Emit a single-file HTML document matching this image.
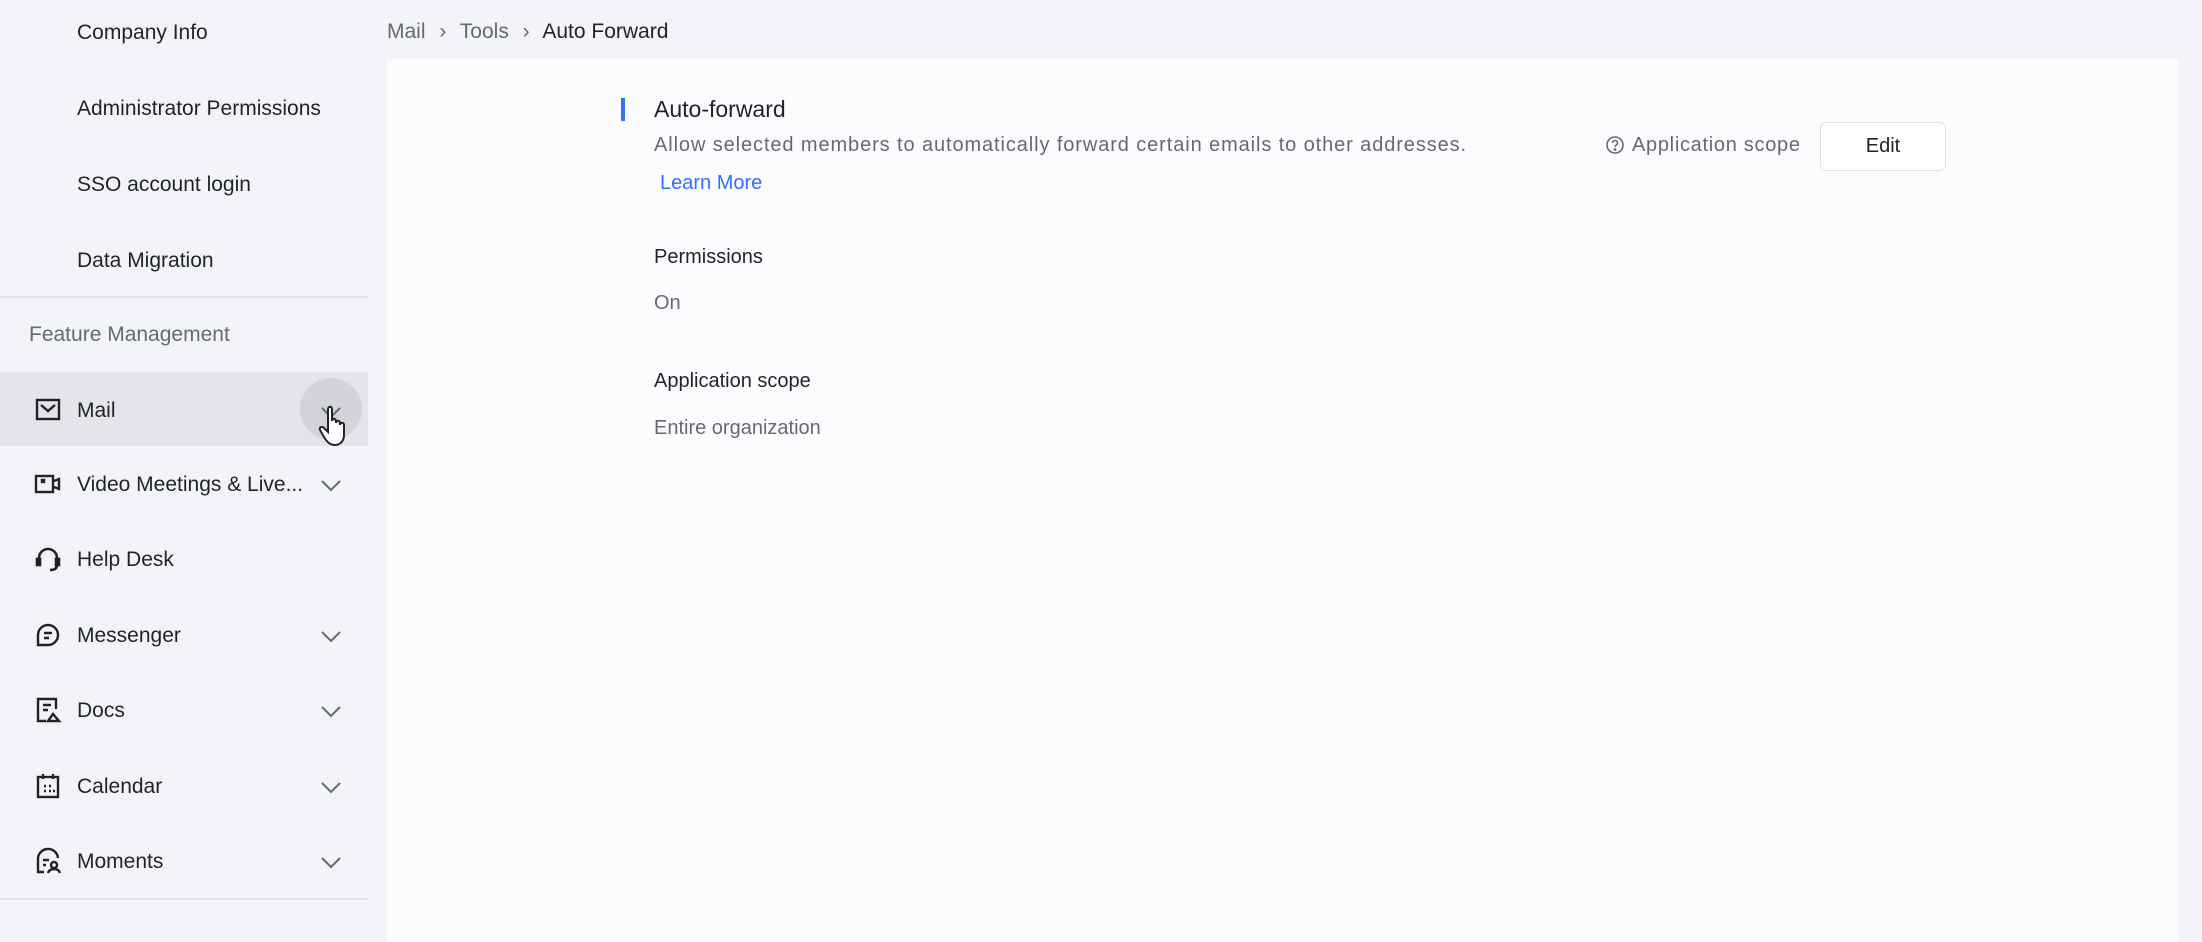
<!DOCTYPE html>
<html><head><meta charset="utf-8"><style>
*{margin:0;padding:0;box-sizing:border-box}
body{width:2202px;height:942px;background:#f3f4f7;font-family:"Liberation Sans",sans-serif;position:relative;overflow:hidden;color:#1f2329}
.t{position:absolute;white-space:nowrap;line-height:1}
.side{font-size:21px;color:#1f2329}
.ic{position:absolute;left:34px;width:28px;height:28px}
.chev{position:absolute;left:320px;width:22px;height:14px}
.panel{position:absolute;left:387px;top:59px;width:1792px;height:883px;background:#fcfcfe}
</style></head><body>
<div class="t side" style="left:77px;top:22px">Company Info</div>
<div class="t side" style="left:77px;top:98px">Administrator Permissions</div>
<div class="t side" style="left:77px;top:174px">SSO account login</div>
<div class="t side" style="left:77px;top:250px">Data Migration</div>
<div style="position:absolute;left:0;top:296px;width:368px;height:2px;background:#dfe0e4"></div>
<div class="t" style="left:29px;top:324px;font-size:21px;color:#646a73">Feature Management</div>
<div style="position:absolute;left:0;top:372px;width:368px;height:74px;background:#e4e5e8"></div>
<div style="position:absolute;left:300px;top:378px;width:62px;height:62px;border-radius:50%;background:#d3d4d7"></div>

<svg class="ic" style="top:396px" viewBox="0 0 28 28" fill="none" stroke="#1f2329" stroke-width="2.4"><rect x="3" y="4" width="22" height="19"/><path d="M7 9l7 6 7-6"/></svg>
<div class="t side" style="left:77px;top:400px">Mail</div>
<svg class="chev" style="top:405px" viewBox="0 0 22 14" fill="none" stroke="#646a73" stroke-width="2"><path d="M2 3l9 9 9-9"/></svg>
<svg style="position:absolute;left:318px;top:405px;width:34px;height:42px" viewBox="0 0 34 42"><path d="M10 4c0-3 4-3 4 0v12c0-3 4-3 4 0v2c0-3 4-3 4 0v2c0-3 4-3 4 0v10c0 6-4 10-9 10-5 0-8-3-11-8l-4-7c-1-3 2-4 4-2l4 4z" fill="#fff" stroke="#1f2329" stroke-width="2"/></svg>

<svg class="ic" style="top:470px" viewBox="0 0 28 28" fill="none" stroke="#1f2329" stroke-width="2.4"><rect x="2" y="6" width="17" height="16"/><path d="M20 11l5-2v10l-5-2"/><rect x="8" y="10" width="2" height="2" fill="#1f2329"/></svg>
<div class="t side" style="left:77px;top:474px">Video Meetings &amp; Live...</div>
<svg class="chev" style="top:478px" viewBox="0 0 22 14" fill="none" stroke="#646a73" stroke-width="2"><path d="M2 3l9 9 9-9"/></svg>

<svg class="ic" style="top:545px" viewBox="0 0 28 28" fill="none" stroke="#1f2329" stroke-width="2.6"><path d="M5 16v-3a9 9 0 0118 0v3"/><rect x="3" y="14" width="3" height="6" fill="#1f2329"/><rect x="22" y="14" width="3" height="6" fill="#1f2329"/><path d="M23 20c0 4-3 5-7 5"/></svg>
<div class="t side" style="left:77px;top:549px">Help Desk</div>

<svg class="ic" style="top:621px" viewBox="0 0 28 28" fill="none" stroke="#1f2329" stroke-width="2.4"><path d="M4 24V14a10 10 0 1110 10z"/><path d="M10 12h8M10 17h5"/></svg>
<div class="t side" style="left:77px;top:625px">Messenger</div>
<svg class="chev" style="top:629px" viewBox="0 0 22 14" fill="none" stroke="#646a73" stroke-width="2"><path d="M2 3l9 9 9-9"/></svg>

<svg class="ic" style="top:696px" viewBox="0 0 28 28" fill="none" stroke="#1f2329" stroke-width="2.4"><path d="M12 25H4V3h18v10"/><path d="M9 9h8M9 14h5"/><path d="M14 25l5-7 6 7z"/></svg>
<div class="t side" style="left:77px;top:700px">Docs</div>
<svg class="chev" style="top:704px" viewBox="0 0 22 14" fill="none" stroke="#646a73" stroke-width="2"><path d="M2 3l9 9 9-9"/></svg>

<svg class="ic" style="top:772px" viewBox="0 0 28 28" fill="none" stroke="#1f2329" stroke-width="2.4"><rect x="4" y="5" width="20" height="20"/><path d="M9 2v5M19 2v5"/><path d="M10 14h2M15 14h2M10 19h2M15 19h2M19 19h2"/></svg>
<div class="t side" style="left:77px;top:776px">Calendar</div>
<svg class="chev" style="top:780px" viewBox="0 0 22 14" fill="none" stroke="#646a73" stroke-width="2"><path d="M2 3l9 9 9-9"/></svg>

<svg class="ic" style="top:847px" viewBox="0 0 28 28" fill="none" stroke="#1f2329" stroke-width="2.4"><path d="M10 25H4V13a10 10 0 0120-2"/><path d="M9 13h6M9 18h3"/><circle cx="20" cy="18" r="3"/><path d="M14 26c1-3 3-4 6-4s5 1 6 4"/></svg>
<div class="t side" style="left:77px;top:851px">Moments</div>
<svg class="chev" style="top:855px" viewBox="0 0 22 14" fill="none" stroke="#646a73" stroke-width="2"><path d="M2 3l9 9 9-9"/></svg>
<div style="position:absolute;left:0;top:898px;width:368px;height:2px;background:#dfe0e4"></div>

<div class="t" style="left:387px;top:21px;font-size:21px;color:#646a73">Mail <span style="margin:0 8px">&#8250;</span> Tools <span style="margin:0 8px">&#8250;</span> <span style="color:#1f2329">Auto Forward</span></div>

<div class="panel"></div>
<div style="position:absolute;left:621px;top:98px;width:4px;height:23px;background:#3370ff"></div>
<div class="t" style="left:654px;top:98px;font-size:23px;color:#1f2329">Auto-forward</div>
<div class="t" style="left:654px;top:135px;font-size:20px;color:#646a73;letter-spacing:0.9px">Allow selected members to automatically forward certain emails to other addresses.</div>
<div class="t" style="left:660px;top:173px;font-size:20px;color:#3370ff">Learn More</div>
<div class="t" style="left:654px;top:247px;font-size:20px;color:#1f2329">Permissions</div>
<div class="t" style="left:654px;top:293px;font-size:20px;color:#646a73">On</div>
<div class="t" style="left:654px;top:371px;font-size:20px;color:#1f2329">Application scope</div>
<div class="t" style="left:654px;top:418px;font-size:20px;color:#646a73">Entire organization</div>

<svg style="position:absolute;left:1605px;top:135px;width:20px;height:20px" viewBox="0 0 20 20" fill="none" stroke="#646a73" stroke-width="1.6"><circle cx="10" cy="10" r="8"/><path d="M7.5 8a2.5 2.5 0 115 0c0 2-2.5 2-2.5 4"/><circle cx="10" cy="14.5" r=".6" fill="#646a73"/></svg>
<div class="t" style="left:1632px;top:135px;font-size:20px;color:#646a73;letter-spacing:0.7px">Application scope</div>
<div style="position:absolute;left:1820px;top:122px;width:126px;height:49px;border:1px solid #dee0e3;border-radius:6px;background:#fff;font-size:20px;line-height:47px;text-align:center;color:#1f2329">Edit</div>
</body></html>
